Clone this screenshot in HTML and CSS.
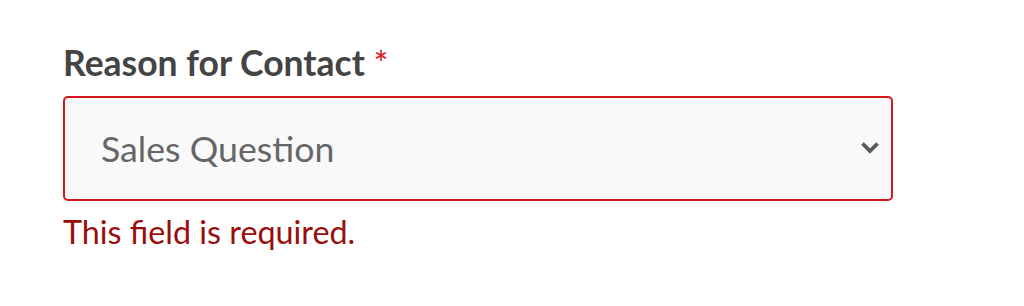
FILE: index.html
```html
<!DOCTYPE html>
<html lang="en">
<head>
  <meta charset="UTF-8" />
  <title>Contact</title>
  <link rel="stylesheet" href="styles.css">
</head>
<body>

  <div class="field">
    <label class="field-label" for="reason">Reason for Contact <span class="required">*</span></label>
    <div class="select-wrap">
      <select id="reason" class="field-select">
        <option>Sales Question</option>
        <option>Support</option>
        <option>Other</option>
      </select>
      <svg class="chevron" width="20" height="14" viewBox="0 0 20 14">
        <path d="M2.5 2.5 L10 10 L17.5 2.5" fill="none" stroke="#585858" stroke-width="3.8" />
      </svg>
    </div>
    <div class="field-error">This field is required.</div>
  </div>

</body>
</html>
```

FILE: styles.css
```css
html, body {
  margin: 0;
  padding: 0;
  background: #fff;
  font-family: Lato, "Open Sans", sans-serif;
}

.field {
  width: 830px;
  padding: 38px 0 0 63px;
}

.field-label {
  display: block;
  font-weight: bold;
  font-size: 35.5px;
  line-height: 50px;
  color: #444;
  margin-bottom: 8px;
}

.required {
  color: #e0191f;
  font-weight: normal;
}

.select-wrap {
  position: relative;
}

.field-select {
  appearance: none;
  -webkit-appearance: none;
  width: 100%;
  height: 105px;
  box-sizing: border-box;
  border: 2px solid #d4171d;
  border-radius: 5px;
  background: #f9f9f9;
  font-family: Lato, "Open Sans", sans-serif;
  font-size: 35.7px;
  color: #666;
  padding: 0 36px;
  outline: none;
}

.chevron {
  position: absolute;
  right: 13px;
  top: 45px;
  pointer-events: none;
}

.field-error {
  font-size: 32.3px;
  line-height: 44px;
  color: #990d0d;
  margin-top: 9px;
}
```
